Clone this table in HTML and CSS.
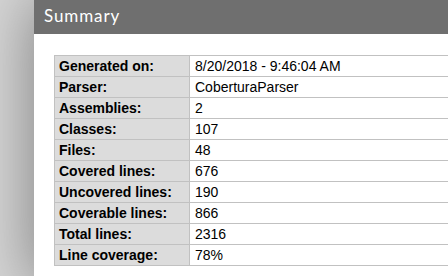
FILE: index.html
```html
<!DOCTYPE html>
<html>
<head>
<meta charset="utf-8">
<link rel="stylesheet" href="styles.css">
</head>
<body>
<div class="container">
  <h1 class="title">Summary</h1>
  <div class="content">
    <table class="overview">
      <colgroup><col class="col-label"><col></colgroup>
      <tr><th>Generated on:</th><td>8/20/2018 - 9:46:04 AM</td></tr>
      <tr><th>Parser:</th><td>CoberturaParser</td></tr>
      <tr><th>Assemblies:</th><td>2</td></tr>
      <tr><th>Classes:</th><td>107</td></tr>
      <tr><th>Files:</th><td>48</td></tr>
      <tr><th>Covered lines:</th><td>676</td></tr>
      <tr><th>Uncovered lines:</th><td>190</td></tr>
      <tr><th>Coverable lines:</th><td>866</td></tr>
      <tr><th>Total lines:</th><td>2316</td></tr>
      <tr><th>Line coverage:</th><td>78%</td></tr>
    </table>
  </div>
</div>
</body>
</html>
```
FILE: styles.css
```css
html, body {
  margin: 0;
  padding: 0;
  background: #d6d6d6;
  overflow: hidden;
  height: 100%;
}
body {
  font-family: "Liberation Sans", Arial, sans-serif;
  font-size: 14px;
  color: #000;
}
.container {
  margin-left: 34px;
  width: 700px;
  min-height: 100%;
  background: #fff;
  box-shadow: 0 0 60px #7d7d7d;
}
.title {
  margin: 0;
  background: #6f6f6f;
  color: #fff;
  font-family: "Lato", "DejaVu Sans", sans-serif;
  font-weight: normal;
  font-size: 17px;
  letter-spacing: 0.9px;
  line-height: 20px;
  padding: 6px 10px 8px 10px;
}
.content {
  padding: 21px 20px 20px 20px;
}
.overview {
  border-collapse: collapse;
  border: 1px solid #c1c1c1;
  width: 100%;
}
.col-label {
  width: 135px;
}
.overview th,
.overview td {
  border: 1px solid #c1c1c1;
  line-height: 16px;
  padding: 2px 5px 2px 5px;
  text-align: left;
}
.overview th {
  background: #dcdcdc;
  font-weight: bold;
  padding-left: 4px;
}
```
